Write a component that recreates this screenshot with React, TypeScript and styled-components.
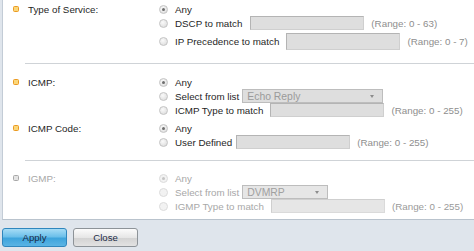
import React, { FC } from 'react';
import styled, { createGlobalStyle, css } from 'styled-components';

const GlobalStyle = createGlobalStyle`
  html, body {
    margin: 0;
    padding: 0;
    background: #dfe5ec;
  }
  body {
    font-family: 'Liberation Sans', Arial, sans-serif;
    font-size: 9.8px;
    color: #1f1f1f;
  }
`;

type RadioOpt = {
  text: string;
  checked?: boolean;
  height?: number;
  gapTop?: number;
  field?: 'input' | 'select';
  fieldWidth?: number;
  fieldHeight?: number;
  fieldGap?: number;
  value?: string;
  range?: string;
};

type Group = {
  label: string;
  padTop: number;
  options: RadioOpt[];
};

const App: FC = () => {
  const renderGroup = (g: Group, disabled = false) => (
    <Section padTop={g.padTop} key={g.label}>
      <LabelCell>
        <Bullet disabled={disabled} />
        <LabelText disabled={disabled}>{g.label}</LabelText>
      </LabelCell>
      <Options>
        {g.options.map((o) => (
          <OptionRow key={o.text} h={o.height ?? 14} gapTop={o.gapTop ?? 0}>
            <Radio checked={!!o.checked} disabled={disabled} />
            <OptText disabled={disabled}>{o.text}</OptText>
            {o.field === 'input' && (
              <TextBox
                disabled={disabled}
                style={{ width: o.fieldWidth ?? 114, height: o.fieldHeight ?? 14 }}
                gap={o.fieldGap ?? 7}
              />
            )}
            {o.field === 'select' && (
              <SelectBox disabled={disabled} style={{ width: o.fieldWidth }} gap={o.fieldGap ?? 3}>
                <span>{o.value}</span>
                <Caret />
              </SelectBox>
            )}
            {o.range && <Range disabled={disabled}>{o.range}</Range>}
          </OptionRow>
        ))}
      </Options>
    </Section>
  );

  return (
    <>
      <GlobalStyle />
      <Page>
        <Panel>
          {renderGroup({
            label: 'Type of Service:',
            padTop: 2,
            options: [
              { text: 'Any', checked: true },
              { text: 'DSCP to match', field: 'input', fieldGap: 8, range: '(Range: 0 - 63)' },
              {
                text: 'IP Precedence to match',
                gapTop: 3,
                height: 17,
                field: 'input',
                fieldHeight: 17,
                fieldWidth: 114,
                range: '(Range: 0 - 7)',
              },
            ],
          })}
          <Divider gapTop={13} />
          {renderGroup({
            label: 'ICMP:',
            padTop: 11,
            options: [
              { text: 'Any', checked: true },
              { text: 'Select from list', field: 'select', fieldWidth: 141, value: 'Echo Reply' },
              { text: 'ICMP Type to match', field: 'input', range: '(Range: 0 - 255)' },
            ],
          })}
          {renderGroup({
            label: 'ICMP Code:',
            padTop: 4,
            options: [
              { text: 'Any', checked: true },
              { text: 'User Defined', field: 'input', fieldGap: 4, range: '(Range: 0 - 255)' },
            ],
          })}
          <Divider gapTop={11} />
          {renderGroup(
            {
              label: 'IGMP:',
              padTop: 10,
              options: [
                { text: 'Any', checked: true },
                { text: 'Select from list', field: 'select', fieldWidth: 86, value: 'DVMRP' },
                { text: 'IGMP Type to match', field: 'input', range: '(Range: 0 - 255)' },
              ],
            },
            true,
          )}
        </Panel>

        <ButtonBar>
          <Button primary>Apply</Button>
          <Button>Close</Button>
        </ButtonBar>
      </Page>
    </>
  );
};

export default App;

/* ───────────── Styled Components ───────────── */

const Page = styled.div`
  width: 474px;
  height: 251px;
  overflow: hidden;
  padding-left: 2px;
  box-sizing: border-box;
`;

const Panel = styled.div`
  background: #ffffff;
  border-left: 1px solid #c3ccd6;
  border-bottom: 1px solid #b9c3cd;
  padding-bottom: 6px;
`;

const Section = styled.div<{ padTop: number }>`
  display: grid;
  grid-template-columns: 146px 1fr;
  padding-top: ${({ padTop }) => padTop}px;
  padding-left: 10px;
`;

const LabelCell = styled.div`
  display: flex;
  align-items: center;
  height: 14px;
`;

const Bullet = styled.span<{ disabled?: boolean }>`
  width: 4px;
  height: 4px;
  border-radius: 1.5px;
  margin-right: 9px;
  flex-shrink: 0;
  ${({ disabled }) =>
    disabled
      ? css`
          background: #e4e4e4;
          border: 1px solid #a8a8a8;
        `
      : css`
          background: #fbd77a;
          border: 1px solid #eb9a22;
        `}
`;

const LabelText = styled.span<{ disabled?: boolean }>`
  color: ${({ disabled }) => (disabled ? '#a8a8a8' : '#1f1f1f')};
  white-space: nowrap;
`;

const Options = styled.div`
  display: flex;
  flex-direction: column;
`;

const OptionRow = styled.div<{ h: number; gapTop: number }>`
  display: flex;
  align-items: center;
  height: ${({ h }) => h}px;
  margin-top: ${({ gapTop }) => gapTop}px;
  white-space: nowrap;
`;

const Radio = styled.span<{ checked: boolean; disabled?: boolean }>`
  position: relative;
  width: 7px;
  height: 7px;
  border-radius: 50%;
  border: 1px solid ${({ disabled }) => (disabled ? '#dcdcdc' : '#c4c4c4')};
  background: ${({ disabled }) =>
    disabled ? '#f2f2f2' : 'radial-gradient(circle at 40% 35%, #fafafa, #d8d8d8)'};
  margin-right: 7px;
  flex-shrink: 0;

  ${({ checked, disabled }) =>
    checked &&
    css`
      &::after {
        content: '';
        position: absolute;
        left: 2px;
        top: 2px;
        width: 3px;
        height: 3px;
        border-radius: 50%;
        background: ${disabled ? '#c4c4c4' : '#6e6e6e'};
      }
    `}
`;

const OptText = styled.span<{ disabled?: boolean }>`
  color: ${({ disabled }) => (disabled ? '#a8a8a8' : '#1f1f1f')};
`;

const TextBox = styled.span<{ gap: number; disabled?: boolean }>`
  display: inline-block;
  box-sizing: border-box;
  margin-left: ${({ gap }) => gap}px;
  background: ${({ disabled }) => (disabled ? '#e6e6e6' : '#dedede')};
  border: 1px solid ${({ disabled }) => (disabled ? '#dadada' : '#cfcfcf')};
  border-top-color: ${({ disabled }) => (disabled ? '#cfcfcf' : '#b4b4b4')};
  border-left-color: ${({ disabled }) => (disabled ? '#cfcfcf' : '#b4b4b4')};
`;

const SelectBox = styled.span<{ gap: number; disabled?: boolean }>`
  display: inline-flex;
  align-items: center;
  justify-content: space-between;
  box-sizing: border-box;
  height: 14px;
  margin-left: ${({ gap }) => gap}px;
  padding: 0 8px 0 4px;
  background: ${({ disabled }) => (disabled ? '#e6e6e6' : '#dedede')};
  border: 1px solid #bdbdbd;
  color: ${({ disabled }) => (disabled ? '#a0a0a0' : '#9a9a9a')};
  font-size: 10.4px;
`;

const Caret = styled.span`
  width: 0;
  height: 0;
  border-left: 2.5px solid transparent;
  border-right: 2.5px solid transparent;
  border-top: 3px solid #8c8c8c;
`;

const Range = styled.span<{ disabled?: boolean }>`
  margin-left: 7px;
  color: ${({ disabled }) => (disabled ? '#9a9a9a' : '#8e8e8e')};
`;

const Divider = styled.div<{ gapTop: number }>`
  height: 1px;
  margin-top: ${({ gapTop }) => gapTop}px;
  margin-left: 22px;
  background: #cfd3d7;
`;

const ButtonBar = styled.div`
  display: flex;
  gap: 6px;
  margin-top: 8px;
`;

const Button = styled.button<{ primary?: boolean }>`
  width: 65px;
  height: 19px;
  box-sizing: border-box;
  padding: 0;
  border-radius: 3px;
  font-family: 'Liberation Sans', Arial, sans-serif;
  font-size: 9.6px;
  color: #1b2a45;
  cursor: pointer;
  ${({ primary }) =>
    primary
      ? css`
          border: 1px solid #2f86bd;
          background: linear-gradient(#a6dcf6 0%, #6cc0ea 45%, #3ea4dc 55%, #5ab4e4 100%);
        `
      : css`
          border: 1px solid #8d9398;
          background: linear-gradient(#fbfbfb 0%, #e6e6e6 50%, #d3d3d3 55%, #e2e2e2 100%);
        `}
`;
